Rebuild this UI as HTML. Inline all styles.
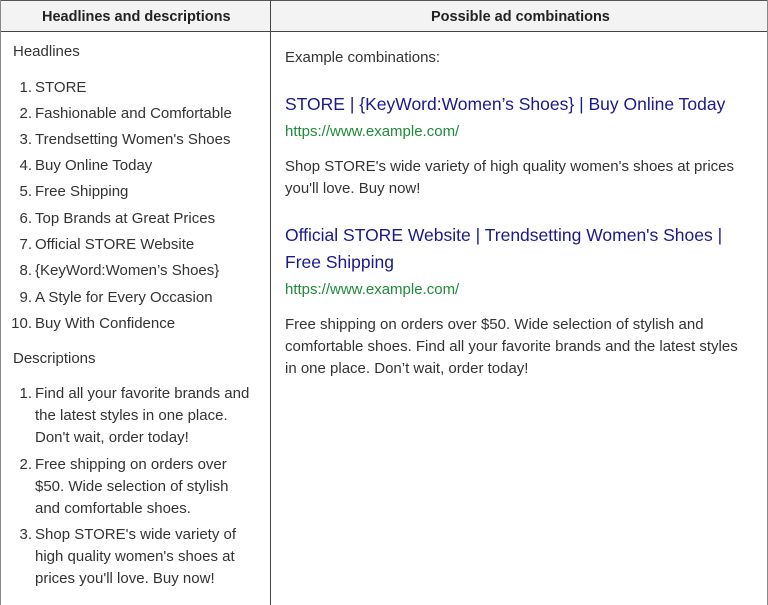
<!DOCTYPE html>
<html><head><meta charset="utf-8"><style>
*{margin:0;padding:0;box-sizing:border-box}
body{width:768px;height:605px;background:#fff;position:relative;overflow:hidden;font-family:"Liberation Sans",Arial,sans-serif;color:#333}
.hd{position:absolute;top:0;left:0;width:768px;height:32px;background:#f3f3f3;border-top:1px solid #555;border-bottom:1px solid #444}
.vl{position:absolute;top:0;bottom:0;width:1px;background:#444}
.t{position:absolute;white-space:nowrap;line-height:20px;transform:translateY(-9px)}
.h{font-weight:bold;font-size:14.5px;color:#222}
.l{font-size:15px}
.b{font-size:17.5px;color:#1a1a8a}
.g{font-size:15px;color:#1e8a3a}
.nn{position:absolute;left:0;width:32px;text-align:right}
.tx{position:absolute;left:35px}
</style></head><body>
<div class="hd"></div>
<div class="vl" style="left:0;background:#888"></div>
<div class="vl" style="left:270px"></div>
<div class="vl" style="left:767px;background:#888"></div>
<div class="t h" style="left:42px;top:16px">Headlines and descriptions</div>
<div class="t h" style="left:431px;top:16px">Possible ad combinations</div>

<div class="t l" style="left:13px;top:51px">Headlines</div>
<div class="t l" style="left:13px;top:358px">Descriptions</div>

<div class="t l" style="left:0;top:87px;width:300px"><span class="nn">1.</span><span class="tx">STORE</span></div>
<div class="t l" style="left:0;top:113px;width:300px"><span class="nn">2.</span><span class="tx">Fashionable and Comfortable</span></div>
<div class="t l" style="left:0;top:139px;width:300px"><span class="nn">3.</span><span class="tx">Trendsetting Women's Shoes</span></div>
<div class="t l" style="left:0;top:165px;width:300px"><span class="nn">4.</span><span class="tx">Buy Online Today</span></div>
<div class="t l" style="left:0;top:191px;width:300px"><span class="nn">5.</span><span class="tx">Free Shipping</span></div>
<div class="t l" style="left:0;top:218px;width:300px"><span class="nn">6.</span><span class="tx">Top Brands at Great Prices</span></div>
<div class="t l" style="left:0;top:244px;width:300px"><span class="nn">7.</span><span class="tx">Official STORE Website</span></div>
<div class="t l" style="left:0;top:270px;width:300px"><span class="nn">8.</span><span class="tx">{KeyWord:Women’s Shoes}</span></div>
<div class="t l" style="left:0;top:297px;width:300px"><span class="nn">9.</span><span class="tx">A Style for Every Occasion</span></div>
<div class="t l" style="left:0;top:323px;width:300px"><span class="nn">10.</span><span class="tx">Buy With Confidence</span></div>

<div class="t l" style="left:0;top:393px;width:300px"><span class="nn">1.</span><span class="tx">Find all your favorite brands and</span></div>
<div class="t l" style="left:35px;top:415px">the latest styles in one place.</div>
<div class="t l" style="left:35px;top:437px">Don't wait, order today!</div>
<div class="t l" style="left:0;top:464px;width:300px"><span class="nn">2.</span><span class="tx">Free shipping on orders over</span></div>
<div class="t l" style="left:35px;top:486px">$50. Wide selection of stylish</div>
<div class="t l" style="left:35px;top:508px">and comfortable shoes.</div>
<div class="t l" style="left:0;top:534px;width:300px"><span class="nn">3.</span><span class="tx">Shop STORE's wide variety of</span></div>
<div class="t l" style="left:35px;top:556px">high quality women's shoes at</div>
<div class="t l" style="left:35px;top:578px">prices you'll love. Buy now!</div>

<div class="t l" style="left:285px;top:57px">Example combinations:</div>
<div class="t b" style="left:285px;top:103px">STORE | {KeyWord:Women’s Shoes} | Buy Online Today</div>
<div class="t g" style="left:285px;top:131px">https://www.example.com/</div>
<div class="t l" style="left:285px;top:166px">Shop STORE's wide variety of high quality women's shoes at prices</div>
<div class="t l" style="left:285px;top:188px">you'll love. Buy now!</div>
<div class="t b" style="left:285px;top:234px">Official STORE Website | Trendsetting Women's Shoes |</div>
<div class="t b" style="left:285px;top:261px">Free Shipping</div>
<div class="t g" style="left:285px;top:289px">https://www.example.com/</div>
<div class="t l" style="left:285px;top:324px">Free shipping on orders over $50. Wide selection of stylish and</div>
<div class="t l" style="left:285px;top:346px">comfortable shoes. Find all your favorite brands and the latest styles</div>
<div class="t l" style="left:285px;top:368px">in one place. Don’t wait, order today!</div>
</body></html>
